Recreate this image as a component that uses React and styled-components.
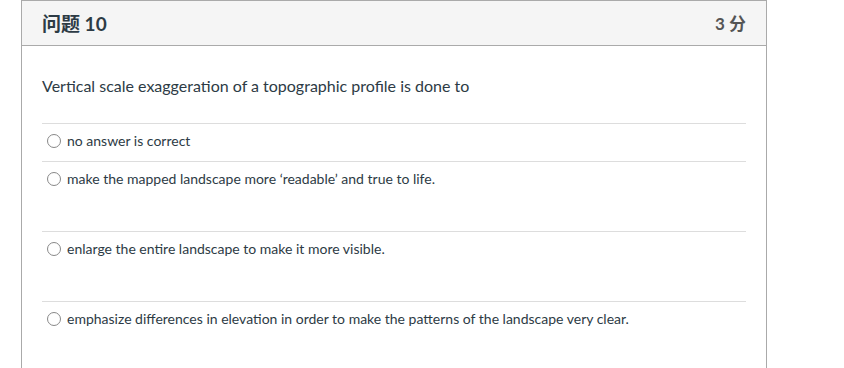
import React from 'react';
import styled, { createGlobalStyle } from 'styled-components';

const GlobalStyle = createGlobalStyle`
  body {
    margin: 0;
    background: #fff;
    font-family: Lato, "Noto Sans CJK SC", sans-serif;
    color: #2d3b45;
  }
`;

const answers = [
  { text: 'no answer is correct', tall: false },
  { text: 'make the mapped landscape more ‘readable’ and true to life.', tall: true },
  { text: 'enlarge the entire landscape to make it more visible.', tall: true },
  { text: 'emphasize differences in elevation in order to make the patterns of the landscape very clear.', tall: true },
];

export default function App() {
  return (
    <>
      <GlobalStyle />
      <Page>
        <QuestionCard>
          <QuestionHeader>
            <QuestionName>问题 10</QuestionName>
            <Points>3 分</Points>
          </QuestionHeader>
          <QuestionBody>
            <QuestionText>Vertical scale exaggeration of a topographic profile is done to</QuestionText>
            <AnswerList>
              {answers.map((a) => (
                <Answer key={a.text} $tall={a.tall}>
                  <Radio />
                  <AnswerLabel>{a.text}</AnswerLabel>
                </Answer>
              ))}
            </AnswerList>
          </QuestionBody>
        </QuestionCard>
      </Page>
    </>
  );
}

const Page = styled.div`
  padding-left: 21px;
`;

const QuestionCard = styled.div`
  width: 746px;
  border: 1px solid #aaaaaa;
  border-bottom: none;
  box-sizing: border-box;
  height: 368px;
`;

const QuestionHeader = styled.div`
  display: flex;
  align-items: center;
  justify-content: space-between;
  height: 45px;
  padding: 0 20px 2px 20px;
  box-sizing: border-box;
  background: #f5f5f5;
  border-bottom: 1px solid #aaaaaa;
`;

const QuestionName = styled.h2`
  margin: 0;
  font-size: 19px;
  font-weight: 700;
  color: #2d3b45;
`;

const Points = styled.span`
  font-size: 17px;
  font-weight: 700;
  color: #555;
`;

const QuestionBody = styled.div`
  padding: 30px 20px 0 20px;
`;

const QuestionText = styled.p`
  margin: 0 0 27px;
  font-size: 16px;
  line-height: 20px;
`;

const AnswerList = styled.div`
  display: flex;
  flex-direction: column;
`;

const Answer = styled.label`
  display: flex;
  align-items: flex-start;
  gap: 6px;
  border-top: 1px solid #dddddd;
  height: ${(p) => (p.$tall ? '70px' : '38px')};
  box-sizing: border-box;
  padding: 8px 0 0 5px;
  font-size: 14px;
`;

const Radio = styled.span`
  flex: none;
  width: 12px;
  height: 12px;
  margin-top: 2px;
  border: 1px solid #888;
  border-radius: 50%;
`;

const AnswerLabel = styled.span`
  line-height: 18px;
  color: #2d3b45;
`;
